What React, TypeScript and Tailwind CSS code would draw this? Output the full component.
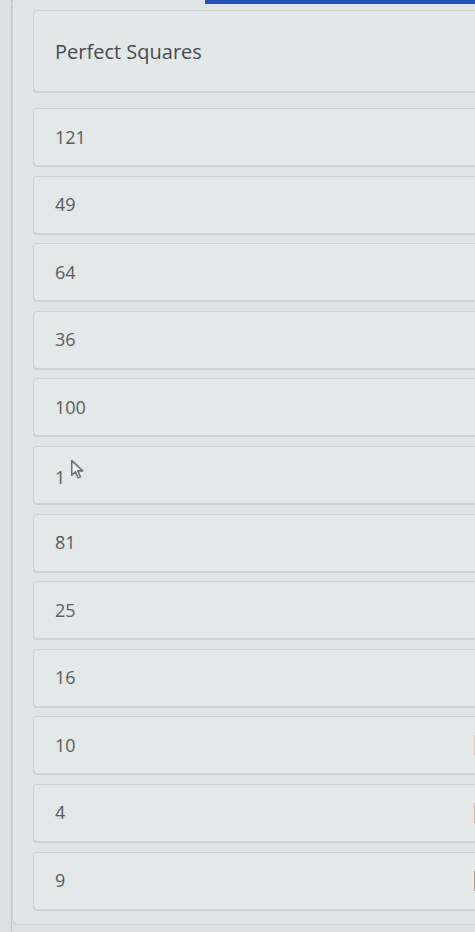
import React from 'react'

const squares = ['121', '49', '64', '36', '100', '1', '81', '25', '16', '10', '4', '9']

// small reddish handles peeking in at the right edge of the last cards
const marks: Record<string, string> = {
  '10': 'bg-[#e9b9b6]',
  '4': 'bg-[#e4a9a4]',
  '9': 'bg-[#b98f86]',
}

const Cursor = () => (
  <svg width="15" height="21" viewBox="0 0 14 20" className="absolute left-[70px] top-[459px]">
    <path
      d="M1.5 1.5 L1.5 15.5 L5 12.2 L7.6 18 L9.8 17 L7.3 11.3 L12 11.3 Z"
      fill="#eef2f2"
      stroke="#6a7275"
      strokeWidth="1.5"
      strokeLinejoin="round"
    />
  </svg>
)

export default function App() {
  return (
    <div
      className="relative w-[475px] h-[932px] overflow-hidden bg-[#d9e0e0] flex"
      style={{ fontFamily: '"Open Sans", "Noto Sans", sans-serif' }}
    >
      <div className="absolute left-[205px] right-0 top-0 h-[4px] bg-[#2452b8]" />

      <div className="w-[12px] shrink-0 border-r border-dotted border-[#a9b3b5]" />

      <div className="flex-1 -mr-[24px] mb-[7px] border-l border-b border-[#c9d1d2] rounded-bl-md bg-[#dee5e5] pl-[20px] pt-[10px] flex flex-col">
        <div className="h-[82px] rounded-[4px] border border-[#cbd2d2] bg-[#e2e8e8] shadow-[0_1px_0_#c8cfcf] flex items-center pl-[21px]">
          <span className="text-[20px] text-[#474c4f] mt-[1px]">Perfect Squares</span>
        </div>

        <div className="mt-[16px] flex flex-col gap-[9.6px]">
          {squares.map((n) => (
            <div
              key={n}
              className="h-[58px] rounded-[4px] border border-[#cbd2d2] bg-[#e3e9e8] shadow-[0_1px_0_#c8cfcf] flex items-center justify-between pl-[21px] pr-[21px]"
            >
              <span className={`text-[18px] text-[#575c5f] ${n === '1' ? 'mt-[6px]' : ''}`}>{n}</span>
              {marks[n] ? <span className={`w-[3px] h-[20px] ${marks[n]}`} /> : null}
            </div>
          ))}
        </div>
      </div>

      <Cursor />
    </div>
  )
}
